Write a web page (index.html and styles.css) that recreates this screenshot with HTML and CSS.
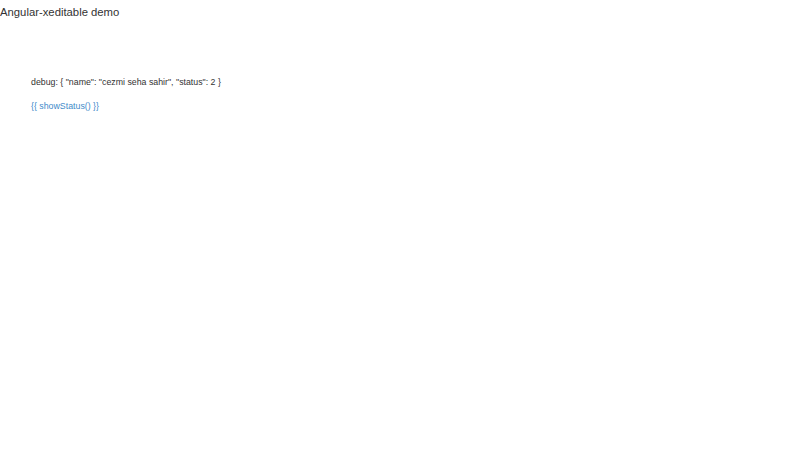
FILE: index.html
```html
<!DOCTYPE html>
<html>
<head>
<meta charset="utf-8">
<link rel="stylesheet" href="styles.css">
</head>
<body>
<div class="title">Angular-xeditable demo</div>
<div class="demo">
  <div class="debug">debug: { "name": "cezmi seha sahir", "status": 2 }</div>
  <a class="editable" href="#">{{ showStatus() }}</a>
</div>
</body>
</html>
```
FILE: styles.css
```css
html, body {
  margin: 0;
  padding: 0;
  background: #fff;
}
body {
  font-family: "Liberation Sans", Arial, sans-serif;
  color: #333;
}
.title {
  font-size: 11.3px;
  line-height: 14px;
  padding-top: 5px;
  color: #333;
}
.demo {
  padding-left: 31px;
  padding-top: 57px;
  font-size: 8.8px;
}
.debug {
  line-height: 12px;
  margin-bottom: 12px;
}
.editable {
  display: inline-block;
  line-height: 12px;
  color: #428bca;
  text-decoration: none;
}
```
